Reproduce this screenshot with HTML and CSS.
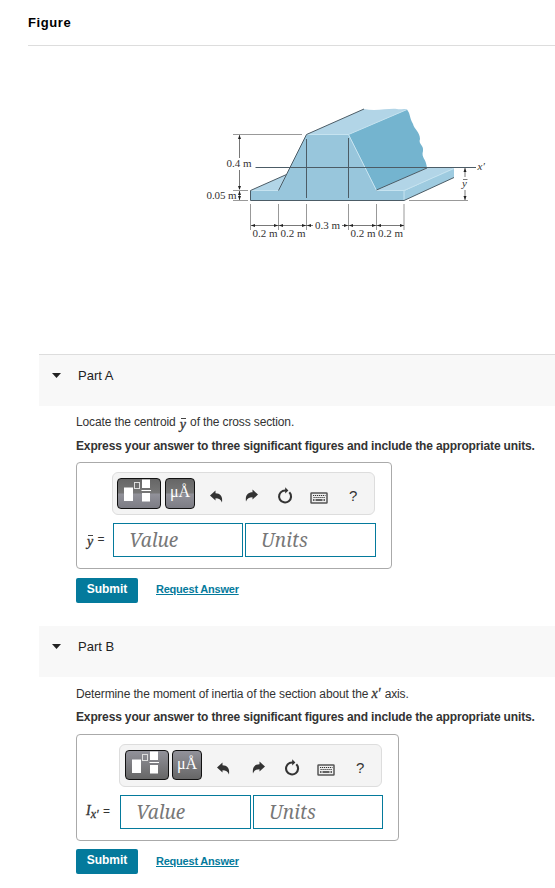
FILE: index.html
```html
<!DOCTYPE html>
<html lang="en">

<head>
    <meta charset="UTF-8">
    <meta name="viewport" content="width=device-width, initial-scale=1.0">
    <title>Figure</title>
    <link rel="stylesheet" href="styles.css">
</head>

<body>
    <!-- shared toolbar icons -->
    <svg class="defs" width="0" height="0">
        <symbol id="undo" viewBox="0 0 13 13">
            <path d="M0 5.5 L5.5 0.6 V3.2 C10 3.2 13 6 12 12.5 C10.8 9.4 9 8.2 5.5 8.2 V10.6 Z" />
        </symbol>
        <symbol id="redo" viewBox="0 0 13 13">
            <path d="M13 5.5 L7.5 0.6 V3.2 C3 3.2 0 6 1 12.5 C2.2 9.4 4 8.2 7.5 8.2 V10.6 Z" />
        </symbol>
        <symbol id="reset" viewBox="0 0 16 17">
            <path d="M12.3 5.2 A6 6 0 1 1 5.8 3.9" fill="none" stroke="#333" stroke-width="2.1" />
            <path d="M5 3.1 L8.2 2.6 V0.2 L11.4 3.4 L8.2 6.4 V4.6 L5.4 5 Z" />
        </symbol>
        <symbol id="keyboard" viewBox="0 0 18 12">
            <rect x="1" y="1" width="16" height="10" rx="0.5" fill="#eee" stroke="#555" stroke-width="1.5" />
            <path d="M3 3.5 H15.5 M3.5 5.5 H15" stroke="#333" stroke-width="1.1" stroke-dasharray="1.2 0.8" />
            <path d="M3 8 H4.5 M5.5 8 H12.5 M13.5 8 H15" stroke="#333" stroke-width="1.4" />
        </symbol>
        <symbol id="templates" viewBox="0 0 44 31">
            <path d="M7 9.5 H16 V23 H7 Z M25 1.5 H33 V10 H25 Z M25 15 H33 V23.5 H25 Z M24.5 12 H34 V13 H24.5 Z" fill="#fff" />
            <rect x="17.5" y="4.5" width="5" height="6" fill="none" stroke="#ddd" />
        </symbol>
    </svg>

    <h1 class="title">Figure</h1>

    <div class="figure">
        <svg width="300" height="150" viewBox="195 95 300 150">
            <path class="light" d="M250.5 190.5 L286.5 174.5 L278.5 190.5 Z" />
            <path class="light" d="M306.5 134.5 L364 109 C376 111.5 389 108 397 109 C401 110 403 108 407 109.5 L349 134.5 Z" />
            <path class="dark" d="M348.5 134.5 L407 109.5 C411 115 409 117 413 124 C414 129 420 132 420 139 C418 144 424 145 423 151 C421 158 426 158 427 168 L376.5 190.5 Z" />
            <path class="light" d="M376.5 190.5 L427 168 H454 L404 191 Z" />
            <path class="side" d="M404 191 L454 168 V177.5 L404 200.5 Z" />
            <path class="front" d="M250.5 200.5 V190.5 H278.5 L306.5 134.5 H348.5 L376.5 190.5 H404 V200.5 Z" />
            <path class="glow" d="M307 134.5 H348.5 L407 109.5 M348.5 134.5 L376.5 190.5 H404 L454 168.5 M404 190.5 V200 M251 190.5 H278" />
            <path class="edge" d="M250.5 200.5 V190.5 L286.5 174.5 M278.5 190.5 L306.5 134.5 L364 109 M250.5 200.5 H404 L454 177.5 M376.5 190 L427 168" />
            <path class="edge" d="M306.5 139 V198 M348.5 138 V198 M255.5 167.5 H476" />
            <path class="dim" d="M233 134.5 H302 M233 190.5 H248 M233 200.5 H248 M250.5 204 V230 M278.5 204 V230 M306.5 204 V230 M348.5 204 V230 M376.5 204 V230 M404 204 V230 M409 200.5 H468" />
            <path class="line" d="M239.5 135 V158 M239.5 170 V189 M239.5 191 V200 M251 225.5 H313 M342 225.5 H404 M465 168 V177 M465 190 V200" />
            <path class="arrow" d="M239.5 135 l-1.5 4 h3 Z M239.5 190 l-1.5 -4 h3 Z M239.5 191 l-1.5 4 h3 Z M239.5 200 l-1.5 -4 h3 Z M465 168 l-1.5 4 h3 Z M465 200 l-1.5 -4 h3 Z" />
            <path class="arrow" d="M251 225.5 l4 -1.5 v3 Z M278 225.5 l-4 -1.5 v3 Z M279 225.5 l4 -1.5 v3 Z M306 225.5 l-4 -1.5 v3 Z M307 225.5 l4 -1.5 v3 Z M348 225.5 l-4 -1.5 v3 Z M349 225.5 l4 -1.5 v3 Z M376 225.5 l-4 -1.5 v3 Z M377 225.5 l4 -1.5 v3 Z M404 225.5 l-4 -1.5 v3 Z" />
            <text x="226.5" y="167" textLength="25">0.4 m</text>
            <text x="206.5" y="199" textLength="30">0.05 m</text>
            <text x="252.5" y="237" textLength="25">0.2 m</text>
            <text x="280.5" y="237" textLength="25">0.2 m</text>
            <text x="315" y="229" textLength="25">0.3 m</text>
            <text x="350.5" y="237" textLength="25">0.2 m</text>
            <text x="378" y="237" textLength="25">0.2 m</text>
            <text class="it" x="477.5" y="170">x′</text>
            <text class="it" x="462" y="187">y</text>
            <path class="line" d="M463 179.5 H467.5" />
        </svg>
    </div>

    <div class="part partA">
        <div class="head"><span class="caret"></span>Part A</div>
        <div class="content">
            <p class="question">Locate the centroid <span class="math bar">y</span> of the cross section.</p>
            <p class="express">Express your answer to three significant figures and include the appropriate units.</p>
            <div class="answer">
                <div class="toolbar">
                    <button class="tool wide"><svg width="44" height="31"><use href="#templates" /></svg></button>
                    <button class="tool">μÅ</button>
                    <svg class="undo" width="13" height="13"><use href="#undo" /></svg>
                    <svg class="redo" width="13" height="13"><use href="#redo" /></svg>
                    <svg class="reset" width="16" height="17"><use href="#reset" /></svg>
                    <svg class="keyboard" width="18" height="12"><use href="#keyboard" /></svg>
                    <span class="help">?</span>
                </div>
                <div class="fields">
                    <label><span class="math bar">y</span> =</label>
                    <input class="value" type="text" placeholder="Value">
                    <input class="units" type="text" placeholder="Units">
                </div>
            </div>
            <div class="actions">
                <button class="submit">Submit</button>
                <a href="#">Request Answer</a>
            </div>
        </div>
    </div>

    <div class="part partB">
        <div class="head"><span class="caret"></span>Part B</div>
        <div class="content">
            <p class="question">Determine the moment of inertia of the section about the <span class="math">x′</span> axis.</p>
            <p class="express">Express your answer to three significant figures and include the appropriate units.</p>
            <div class="answer">
                <div class="toolbar">
                    <button class="tool wide"><svg width="44" height="31"><use href="#templates" /></svg></button>
                    <button class="tool">μÅ</button>
                    <svg class="undo" width="13" height="13"><use href="#undo" /></svg>
                    <svg class="redo" width="13" height="13"><use href="#redo" /></svg>
                    <svg class="reset" width="16" height="17"><use href="#reset" /></svg>
                    <svg class="keyboard" width="18" height="12"><use href="#keyboard" /></svg>
                    <span class="help">?</span>
                </div>
                <div class="fields">
                    <label><span class="math">I<sub>x′</sub></span> =</label>
                    <input class="value" type="text" placeholder="Value">
                    <input class="units" type="text" placeholder="Units">
                </div>
            </div>
            <div class="actions">
                <button class="submit">Submit</button>
                <a href="#">Request Answer</a>
            </div>
        </div>
    </div>
</body>

</html>
```
FILE: styles.css
```css
* {
    box-sizing: border-box;
}

body {
    margin: 0;
    height: 888px;
    overflow: hidden;
    background-color: #fff;
    color: #333;
    font-family: "Liberation Sans", Arial, sans-serif;
    font-size: 12px;
}

.defs {
    display: block;
}

.title {
    margin: 0 0 0 28px;
    height: 46px;
    padding-top: 15px;
    border-bottom: 1px solid #ddd;
    color: #000;
    font-size: 13px;
    line-height: 16px;
    letter-spacing: 0.6px;
}

/* Beam drawing */
.figure {
    height: 308px;
    padding: 49px 0 0 195px;
}

.figure svg {
    display: block;
}

.figure text {
    font-family: "Liberation Serif", serif;
    font-size: 11px;
    fill: #333;
}

.figure .it {
    font-style: italic;
}

.front {
    fill: #98c6dc;
}

.light {
    fill: #b2d5e7;
}

.side {
    fill: #9ecbe0;
}

.dark {
    fill: #74b4cf;
}

.glow, .edge, .dim, .line {
    fill: none;
}

.glow {
    stroke: #c6e3f0;
}

.edge {
    stroke: #4c5c66;
}

.dim {
    stroke: #999;
}

.line {
    stroke: #555;
    stroke-width: 0.8;
}

.arrow {
    fill: #222;
}

/* Parts */
.part {
    margin-left: 39px;
}

.partA {
    height: 272px;
}

.head {
    display: flex;
    height: 52px;
    padding: 12px 0 0 13px;
    background-color: #f8f8f8;
    font-size: 13px;
    line-height: 17px;
    color: #222;
}

.partA .head {
    border-top: 1px solid #ddd;
}

.partB .head {
    height: 51px;
}

.caret {
    width: 9px;
    height: 5px;
    margin: 6px 17px 0 0;
    background-color: #222;
    clip-path: polygon(0 0, 100% 0, 50% 100%);
}

.content {
    padding-left: 37px;
}

.question, .express {
    margin: 0;
    line-height: 16px;
    white-space: nowrap;
}

.question {
    padding-top: 8px;
    height: 32px;
    letter-spacing: -0.13px;
}

.partB .question {
    padding-top: 9px;
}

.express {
    height: 24px;
    font-weight: bold;
    letter-spacing: -0.145px;
}

.partB .express {
    height: 25px;
}

.math {
    font-family: "Liberation Serif", serif;
    font-style: italic;
    font-size: 14px;
    line-height: 1;
    margin-right: 1px;
    -webkit-text-stroke: 0.3px #333;
}

.bar {
    display: inline-block;
    height: 12px;
    padding-left: 1px;
    line-height: 13px;
    background: linear-gradient(#444, #444) 2px 0 / 5px 1px no-repeat;
    vertical-align: -3px;
}

.math sub {
    font-size: 12px;
    line-height: 0;
    vertical-align: -3px;
}

.answer {
    width: 316px;
    height: 107px;
    padding: 9px 0 0 35px;
    border: 1px solid #aaa;
    border-radius: 4px;
}

.partB .answer {
    width: 323px;
    padding-left: 42px;
}

.toolbar {
    display: flex;
    align-items: flex-start;
    width: 263px;
    height: 43px;
    padding: 5px 0 0 4px;
    border: 1px solid #ddd;
    border-radius: 6px;
    background-color: #f4f4f4;
    fill: #333;
}

.tool {
    width: 30px;
    height: 31px;
    margin: 0 0 0 4px;
    padding: 0 0 3px;
    border: 1px solid #111;
    border-radius: 4px;
    background: linear-gradient(#666 0, #777 49%, #92929a 51%, #7c7c84);
    color: #fff;
    font-family: "Liberation Serif", serif;
    font-size: 16px;
    line-height: 26px;
}

.partB .tool {
    height: 30px;
    background: linear-gradient(#92929a, #666);
}

.wide {
    width: 44px;
    margin: 0;
    padding: 0;
}

.wide svg {
    display: block;
    margin: -1px;
}

.partB .toolbar {
    padding-left: 5px;
}

.partB .wide + .tool {
    margin-left: 3px;
}

.undo {
    margin: 12px 0 0 15px;
}

.redo {
    margin: 11px 0 0 22px;
}

.reset {
    margin: 9px 0 0 19px;
}

.keyboard {
    margin: 14px 0 0 17px;
}

.help {
    margin: 9px 0 0 21px;
    font-size: 15px;
    line-height: 18px;
}

.fields {
    display: flex;
    gap: 2px;
    margin: 8px 0 0 -26px;
}

.fields label {
    width: 25px;
    padding-top: 8px;
    font-size: 12px;
    line-height: 16px;
    white-space: nowrap;
}

.partB .fields {
    margin-left: -33px;
}

.partB .fields label {
    width: 32px;
}

.fields input {
    width: 131px;
    height: 34px;
    margin: 0;
    padding: 0 0 1px 15px;
    border: 1px solid #047a9c;
    background-color: #fff;
    font-family: "Noto Serif", "DejaVu Serif", "Liberation Serif", serif;
    font-size: 19px;
    font-style: italic;
}

.partA .value, .partB .units {
    width: 130px;
}

.fields input::placeholder {
    color: #777;
}

.actions {
    display: flex;
    gap: 18px;
    margin-top: 9px;
}

.partB .actions {
    margin-top: 8px;
}

.submit {
    width: 62px;
    height: 25px;
    padding: 0 0 4px;
    border: 0;
    border-radius: 2px;
    background-color: #047a9c;
    color: #fff;
    font-family: "Liberation Sans", Arial, sans-serif;
    font-size: 12px;
    font-weight: bold;
}

.actions a {
    padding-top: 4px;
    color: #047a9c;
    font-size: 11px;
    font-weight: bold;
    line-height: 15px;
    letter-spacing: -0.22px;
}

.partB .actions a {
    padding-top: 5px;
}
```
